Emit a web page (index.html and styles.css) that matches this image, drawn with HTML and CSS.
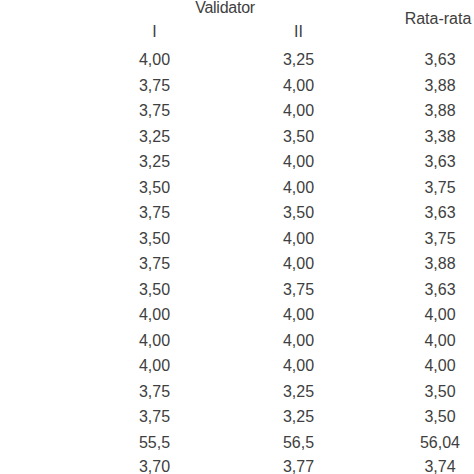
FILE: index.html
```html
<!DOCTYPE html>
<html lang="id">
<head>
<meta charset="utf-8">
<title>Validator</title>
<link rel="stylesheet" href="styles.css">
</head>
<body>
<div class="table">
  <div class="h-validator">Validator</div>
  <div class="h-rata">Rata-rata</div>
  <div class="h-sub">I</div>
  <div class="h-sub">II</div>

  <div class="c">4,00</div><div class="c">3,25</div><div class="c c3">3,63</div>
  <div class="c">3,75</div><div class="c">4,00</div><div class="c c3">3,88</div>
  <div class="c">3,75</div><div class="c">4,00</div><div class="c c3">3,88</div>
  <div class="c">3,25</div><div class="c">3,50</div><div class="c c3">3,38</div>
  <div class="c">3,25</div><div class="c">4,00</div><div class="c c3">3,63</div>
  <div class="c">3,50</div><div class="c">4,00</div><div class="c c3">3,75</div>
  <div class="c">3,75</div><div class="c">3,50</div><div class="c c3">3,63</div>
  <div class="c">3,50</div><div class="c">4,00</div><div class="c c3">3,75</div>
  <div class="c">3,75</div><div class="c">4,00</div><div class="c c3">3,88</div>
  <div class="c">3,50</div><div class="c">3,75</div><div class="c c3">3,63</div>
  <div class="c">4,00</div><div class="c">4,00</div><div class="c c3">4,00</div>
  <div class="c">4,00</div><div class="c">4,00</div><div class="c c3">4,00</div>
  <div class="c">4,00</div><div class="c">4,00</div><div class="c c3">4,00</div>
  <div class="c">3,75</div><div class="c">3,25</div><div class="c c3">3,50</div>
  <div class="c">3,75</div><div class="c">3,25</div><div class="c c3">3,50</div>
  <div class="c">55,5</div><div class="c">56,5</div><div class="c c3">56,04</div>
  <div class="c last">3,70</div><div class="c last">3,77</div><div class="c c3 last">3,74</div>
</div>
</body>
</html>
```
FILE: styles.css
```css
html, body {
  margin: 0;
  padding: 0;
  background: #ffffff;
  overflow: hidden;
  width: 474px;
  height: 474px;
}

.table {
  display: grid;
  grid-template-columns: 143px 145px 103px;
  grid-template-rows: 16px 31px repeat(16, 25.5px) 19px;
  padding-left: 83px;
  font-family: "Liberation Sans", Arial, sans-serif;
  font-size: 16px;
  color: #404040;
  text-align: center;
}

.h-validator {
  grid-column: 1 / 3;
  grid-row: 1;
  line-height: 16px;
  letter-spacing: -0.25px;
  padding-right: 4px;
}

.h-rata {
  grid-column: 3;
  grid-row: 1 / 3;
  line-height: 37px;
  align-self: start;
  padding-left: 31px;
}

.h-sub {
  line-height: 31px;
}

.c {
  line-height: 25.5px;
}

.c3 {
  padding-left: 35px;
}

.c.last {
  line-height: 14px;
  padding-top: 5px;
}
```
